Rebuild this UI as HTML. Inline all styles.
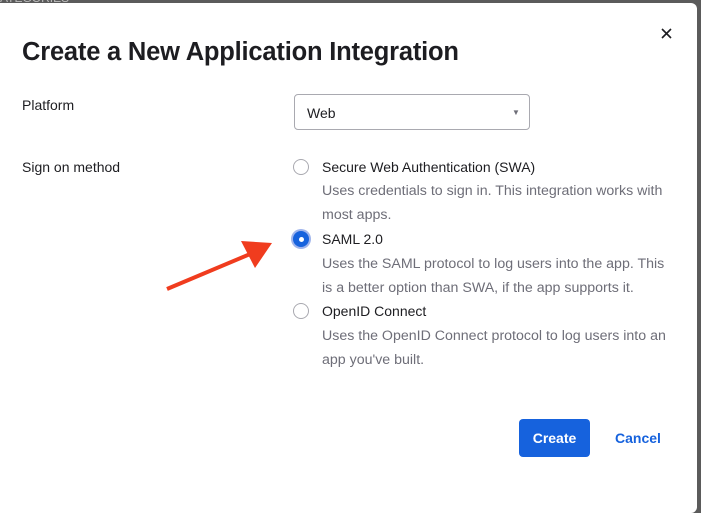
<!DOCTYPE html>
<html><head><style>
body{margin:0;width:701px;height:505px;background:#5b5b5b;position:relative;overflow:hidden;font-family:"Liberation Sans",sans-serif;}
.dlg{position:absolute;left:-6px;top:3px;width:703px;height:510px;background:#fff;border-radius:6px;}
.a{position:absolute;white-space:nowrap;}
h1{position:absolute;left:22px;top:38px;margin:0;font-size:25.5px;font-weight:bold;color:#1d1d21;letter-spacing:-0.2px;}
.lbl{font-size:14px;color:#1d1d21;}
.t{font-size:14px;color:#1d1d21;}
.d{font-size:14.2px;color:#6e6e78;line-height:24px;}
.radio{position:absolute;width:16px;height:16px;border:1.5px solid #a9a9b0;border-radius:50%;box-sizing:border-box;}
</style></head><body>
<div class="a" style="left:0;top:-9px;font-size:12px;color:#bbb">ATEGORIES</div>
<div class="dlg"></div>
<svg class="a" style="left:661px;top:28px" width="11" height="11"><path d="M1 1L10 10M10 1L1 10" stroke="#1d1d21" stroke-width="1.6"/></svg>
<h1>Create a New Application Integration</h1>
<div class="a lbl" style="left:22px;top:97px">Platform</div>
<div class="a" style="left:294px;top:94px;width:236px;height:36px;border:1px solid #a9a9b0;border-radius:4px;box-sizing:border-box"></div>
<div class="a t" style="left:307px;top:105px">Web</div>
<div class="a" style="left:512px;top:108px;font-size:8px;color:#6e6e78">▼</div>
<div class="a lbl" style="left:22px;top:159px">Sign on method</div>
<div class="radio" style="left:293px;top:159px"></div>
<div class="a t" style="left:322px;top:159px">Secure Web Authentication (SWA)</div>
<div class="a d" style="left:322px;top:179px">Uses credentials to sign in. This integration works with<br>most apps.</div>
<div class="a" style="left:291px;top:229px;width:20px;height:20px;border-radius:50%;background:#9fb4ec"></div>
<div class="a" style="left:293px;top:231px;width:16px;height:16px;border-radius:50%;background:#1662dd"></div>
<div class="a" style="left:298.5px;top:236.5px;width:5px;height:5px;border-radius:50%;background:#fff"></div>
<div class="a t" style="left:322px;top:231px">SAML 2.0</div>
<div class="a d" style="left:322px;top:252px">Uses the SAML protocol to log users into the app. This<br>is a better option than SWA, if the app supports it.</div>
<div class="radio" style="left:293px;top:303px"></div>
<div class="a t" style="left:322px;top:303px">OpenID Connect</div>
<div class="a d" style="left:322px;top:324px">Uses the OpenID Connect protocol to log users into an<br>app you've built.</div>
<svg class="a" style="left:160px;top:235px" width="120" height="65"><path d="M7 54L95 17" stroke="#f03c1e" stroke-width="4"/><path d="M112 8L81 6L95 33Z" fill="#f03c1e"/></svg>
<div class="a" style="left:519px;top:419px;width:71px;height:38px;background:#1662dd;border-radius:4px;color:#fff;font-weight:bold;font-size:14px;text-align:center;line-height:38px">Create</div>
<div class="a" style="left:615px;top:430px;color:#1662dd;font-weight:bold;font-size:14px">Cancel</div>
</body></html>
